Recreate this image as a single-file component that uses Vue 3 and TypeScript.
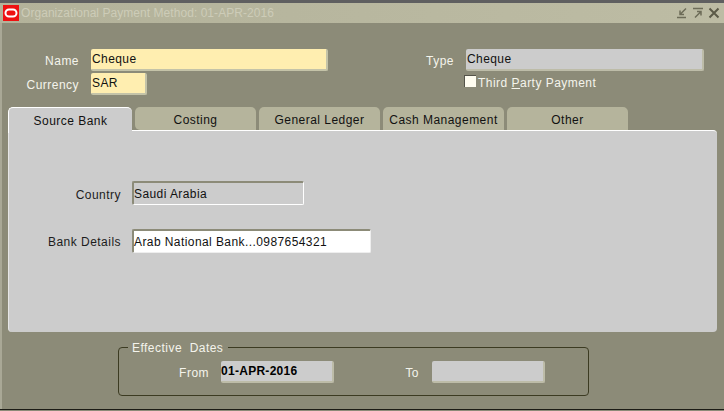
<script setup lang="ts">
const tabs = [
  { label: 'Source Bank', width: 124, active: true },
  { label: 'Costing', width: 121, active: false },
  { label: 'General Ledger', width: 121, active: false },
  { label: 'Cash Management', width: 121, active: false },
  { label: 'Other', width: 121, active: false },
]
</script>

<template>
  <div class="window">
    <div class="titlebar">
      <svg class="logo" width="16" height="16" viewBox="0 0 16 16">
        <rect width="16" height="16" fill="#ee1111" />
        <rect x="2.5" y="4.5" width="11" height="7" rx="3.5" fill="none" stroke="#fff" stroke-width="2" />
      </svg>
      <span class="title">Organizational Payment Method: 01-APR-2016</span>
      <div class="controls">
        <svg width="12" height="12" viewBox="0 0 12 12"><path d="M10 1.5 4 7.5M4 3.5v4h4M1 10.5h9" fill="none" stroke="#6d6c58" stroke-width="1.5" /></svg>
        <svg width="12" height="12" viewBox="0 0 12 12"><path d="M1 1.5h10M3 10.5l6-6M5 4.5h4v4" fill="none" stroke="#6d6c58" stroke-width="1.5" /></svg>
        <svg width="12" height="12" viewBox="0 0 12 12"><path d="M1.5 1.5l9 9M10.5 1.5l-9 9" fill="none" stroke="#5c5b48" stroke-width="2" /></svg>
      </div>
    </div>

    <div class="header">
      <div class="col">
        <div class="row">
          <label class="lbl light w-name">Name</label>
          <div class="field yellow name">Cheque</div>
        </div>
        <div class="row second">
          <label class="lbl light w-name">Currency</label>
          <div class="field yellow currency">SAR</div>
        </div>
      </div>
      <div class="col right">
        <div class="row">
          <label class="lbl light w-type">Type</label>
          <div class="field grey type">Cheque</div>
        </div>
        <div class="check-row">
          <span class="box"></span>
          <span class="check-label">Third <u>P</u>arty Payment</span>
        </div>
      </div>
    </div>

    <div class="tabs">
      <div
        v-for="t in tabs"
        :key="t.label"
        class="tab"
        :class="{ active: t.active }"
        :style="{ width: t.width + 'px' }"
      >{{ t.label }}</div>
    </div>

    <div class="panel">
      <div class="row country">
        <label class="lbl dark w-panel">Country</label>
        <div class="field sunken">Saudi Arabia</div>
      </div>
      <div class="row bank">
        <label class="lbl dark w-panel">Bank Details</label>
        <div class="field white">Arab National Bank...0987654321</div>
      </div>
    </div>

    <fieldset class="dates">
      <legend><span class="legend-text">Effective&nbsp; Dates</span></legend>
      <div class="row dates-row">
        <label class="lbl light w-from">From</label>
        <div class="field grey date bold">01-APR-2016</div>
        <label class="lbl light w-to">To</label>
        <div class="field grey date"></div>
      </div>
    </fieldset>
  </div>
</template>

<style>
html, body { margin: 0; background: #8c8b78; }
</style>

<style scoped>
.window {
  width: 724px;
  height: 410px;
  box-sizing: border-box;
  overflow: hidden;
  background: #8c8b78;
  border-top: 3px solid #5f5f60;
  border-bottom: 1px solid #1c1c16;
  box-shadow: inset 2px 0 0 #a9a896;
  font-family: "Liberation Sans", Arial, sans-serif;
  font-size: 12px;
  letter-spacing: 0.47px;
  color: #111;
}
.titlebar {
  height: 20px;
  display: flex;
  align-items: center;
  padding: 0 3px;
  background: linear-gradient(90deg, #b3b29a, #bdbca4);
}
.logo { flex: none; }
.title { margin-left: 2px; color: #cdccb8; white-space: nowrap; letter-spacing: 0.05px; }
.controls { margin-left: auto; display: flex; gap: 4px; padding-right: 1px; }
.header {
  display: flex;
  padding-top: 26px;
  height: 84px;
  box-sizing: border-box;
}
.col { width: 426px; }
.col.right { width: 298px; }
.row { display: flex; align-items: center; }
.second { margin-top: 2px; }
.lbl { white-space: nowrap; text-align: right; flex: none; }
.light { color: #f4f4ec; }
.dark { color: #1c1c1c; }
.w-name { width: 79px; margin-right: 12px; padding-top: 2px; }
.w-type { width: 28px; margin-right: 12px; padding-top: 2px; }
.field {
  box-sizing: border-box;
  height: 22px;
  line-height: 21px;
  padding-left: 1px;
  flex: none;
  white-space: nowrap;
  border-radius: 2px;
  letter-spacing: 0.42px;
}
.yellow { background: #ffeeb0; border-right: 2px solid #c4c3a8; border-bottom: 2px solid #c4c3a8; }
.grey { background: #cccccc; border-right: 2px solid #bdbca8; border-bottom: 2px solid #bdbca8; }
.name { width: 237px; }
.currency { width: 56px; }
.type { width: 238px; }
.check-row { display: flex; align-items: center; margin-top: 1px; height: 22px; margin-left: 38px; }
.box {
  width: 12px;
  height: 12px;
  background: #fffdf0;
  border-top: 1px solid #55544a;
  border-left: 1px solid #55544a;
  box-sizing: border-box;
  margin-top: -4px;
}
.check-label { margin-left: 2px; color: #f4f4ec; }
.tabs { display: flex; gap: 3px; padding-left: 8px; height: 23px; }
.tab {
  box-sizing: border-box;
  height: 23px;
  line-height: 27px;
  text-align: center;
  background: #b5b49c;
  border-radius: 5px 5px 0 0;
  white-space: nowrap;
}
.tab.active + .tab { border-bottom-left-radius: 5px; }
.tab.active {
  background: #cccccc;
  border-top: 1px solid #fff;
  border-left: 1px solid #fff;
  height: 26px;
  line-height: 26px;
  position: relative;
  z-index: 1;
}
.panel {
  margin: 0 7px 0 8px;
  height: 202px;
  box-sizing: border-box;
  background: #cccccc;
  border-top: 1px solid #fff;
  border-left: 1px solid #e6e6e6;
  border-radius: 0 4px 4px 4px;
  padding-top: 50px;
}
.w-panel { width: 112px; margin-right: 11px; padding-top: 4px; }
.bank .w-panel { padding-top: 2px; }
.sunken {
  width: 172px;
  height: 24px;
  background: #cccccc;
  border-top: 2px solid #8c8b78;
  border-left: 2px solid #8c8b78;
  border-right: 1px solid #fff;
  border-bottom: 1px solid #fff;
  line-height: 23px;
  padding-left: 0;
}
.bank { margin-top: 24px; }
.white {
  width: 239px;
  height: 24px;
  background: #fff;
  border-top: 2px solid #8c8b78;
  border-left: 2px solid #8c8b78;
  border-right: 1px solid #eee;
  border-bottom: 1px solid #eee;
  line-height: 22px;
  padding-left: 0;
}
.dates {
  box-sizing: border-box;
  width: 471px;
  height: 56px;
  margin: 8px 0 0 118px;
  padding: 0;
  border: 1px solid #3c3b22;
  border-radius: 4px;
}
.dates legend {
  margin-left: 9px;
  padding: 0 5px 0 4px;
  color: #f4f4ec;
  line-height: 14px;
}
.legend-text { position: relative; top: 1px; }
.dates-row { margin-top: 7px; }
.w-from { width: 90px; margin-right: 12px; padding-top: 2px; }
.w-to { width: 85px; margin-right: 13px; padding-top: 2px; }
.date { width: 113px; padding-left: 0; }
.bold { font-weight: bold; letter-spacing: 0.28px; color: #000; line-height: 20px; }
</style>
